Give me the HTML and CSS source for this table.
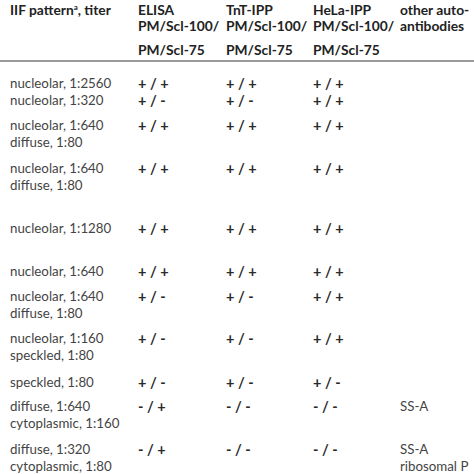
FILE: index.html
```html
<!DOCTYPE html>
<html>
<head>
<meta charset="utf-8">
<link rel="stylesheet" href="styles.css">
</head>
<body>
<div class="tbl">
  <div class="head">
    <div class="cell"><span>IIF pattern<sup>a</sup>, titer</span></div>
    <div class="cell"><span>ELISA</span><span>PM/Scl-100/</span><span class="gap">PM/Scl-75</span></div>
    <div class="cell"><span>TnT-IPP</span><span>PM/Scl-100/</span><span class="gap">PM/Scl-75</span></div>
    <div class="cell"><span>HeLa-IPP</span><span>PM/Scl-100/</span><span class="gap">PM/Scl-75</span></div>
    <div class="cell"><span>other auto-</span><span>antibodies</span></div>
  </div>
  <div class="rule"></div>
  <div class="row p0"><div class="cell">nucleolar, 1:2560</div><div class="cell v">+ / +</div><div class="cell v">+ / +</div><div class="cell v">+ / +</div><div class="cell"></div></div>
  <div class="row p0"><div class="cell">nucleolar, 1:320</div><div class="cell v">+ / -</div><div class="cell v">+ / -</div><div class="cell v">+ / +</div><div class="cell"></div></div>
  <div class="row p8"><div class="cell">nucleolar, 1:640<br>diffuse, 1:80</div><div class="cell v">+ / +</div><div class="cell v">+ / +</div><div class="cell v">+ / +</div><div class="cell"></div></div>
  <div class="row p9"><div class="cell">nucleolar, 1:640<br>diffuse, 1:80</div><div class="cell v">+ / +</div><div class="cell v">+ / +</div><div class="cell v">+ / +</div><div class="cell"></div></div>
  <div class="row p26"><div class="cell">nucleolar, 1:1280</div><div class="cell v">+ / +</div><div class="cell v">+ / +</div><div class="cell v">+ / +</div><div class="cell"></div></div>
  <div class="row p26"><div class="cell">nucleolar, 1:640</div><div class="cell v">+ / +</div><div class="cell v">+ / +</div><div class="cell v">+ / +</div><div class="cell"></div></div>
  <div class="row p8"><div class="cell">nucleolar, 1:640<br>diffuse, 1:80</div><div class="cell v">+ / -</div><div class="cell v">+ / -</div><div class="cell v">+ / +</div><div class="cell"></div></div>
  <div class="row p8"><div class="cell">nucleolar, 1:160<br>speckled, 1:80</div><div class="cell v">+ / -</div><div class="cell v">+ / -</div><div class="cell v">+ / +</div><div class="cell"></div></div>
  <div class="row p10"><div class="cell">speckled, 1:80</div><div class="cell v">+ / -</div><div class="cell v">+ / -</div><div class="cell v">+ / -</div><div class="cell"></div></div>
  <div class="row p7"><div class="cell">diffuse, 1:640<br>cytoplasmic, 1:160</div><div class="cell v">- / +</div><div class="cell v">- / -</div><div class="cell v">- / -</div><div class="cell">SS-A</div></div>
  <div class="row p9"><div class="cell">diffuse, 1:320<br>cytoplasmic, 1:80</div><div class="cell v">- / +</div><div class="cell v">- / -</div><div class="cell v">- / -</div><div class="cell">SS-A<br>ribosomal P</div></div>
</div>
</body>
</html>
```
FILE: styles.css
```css
html, body {
  margin: 0;
  padding: 0;
  background: #fff;
}
body {
  font-family: Lato, "Liberation Sans", sans-serif;
  font-size: 13.3px;
  line-height: 17px;
  color: #444;
  width: 474px;
  height: 474px;
  overflow: hidden;
}
.tbl {
  padding-top: 2px;
}
.head, .row {
  display: grid;
  grid-template-columns: 138px 88px 87px 87px 1fr;
}
.cell {
  white-space: nowrap;
}
.head .cell:first-child, .row .cell:first-child {
  padding-left: 10px;
}
.head {
  font-weight: 700;
  font-size: 13.8px;
  line-height: 16px;
  color: #222;
}
.head .cell {
  display: flex;
  flex-direction: column;
}
.head .gap {
  margin-top: 8px;
}
sup {
  font-size: 8px;
  line-height: 0;
  vertical-align: 5px;
}
.rule {
  height: 2px;
  background: #9a9a9a;
  margin-top: 2px;
  margin-bottom: 12.5px;
}
.p0 { padding-top: 0; }
.p7 { padding-top: 7px; }
.p8 { padding-top: 8px; }
.p9 { padding-top: 9px; }
.p10 { padding-top: 10px; }
.p26 { padding-top: 26px; }
.v {
  font-weight: 700;
  font-size: 14.5px;
  color: #2a2a2a;
}
```
